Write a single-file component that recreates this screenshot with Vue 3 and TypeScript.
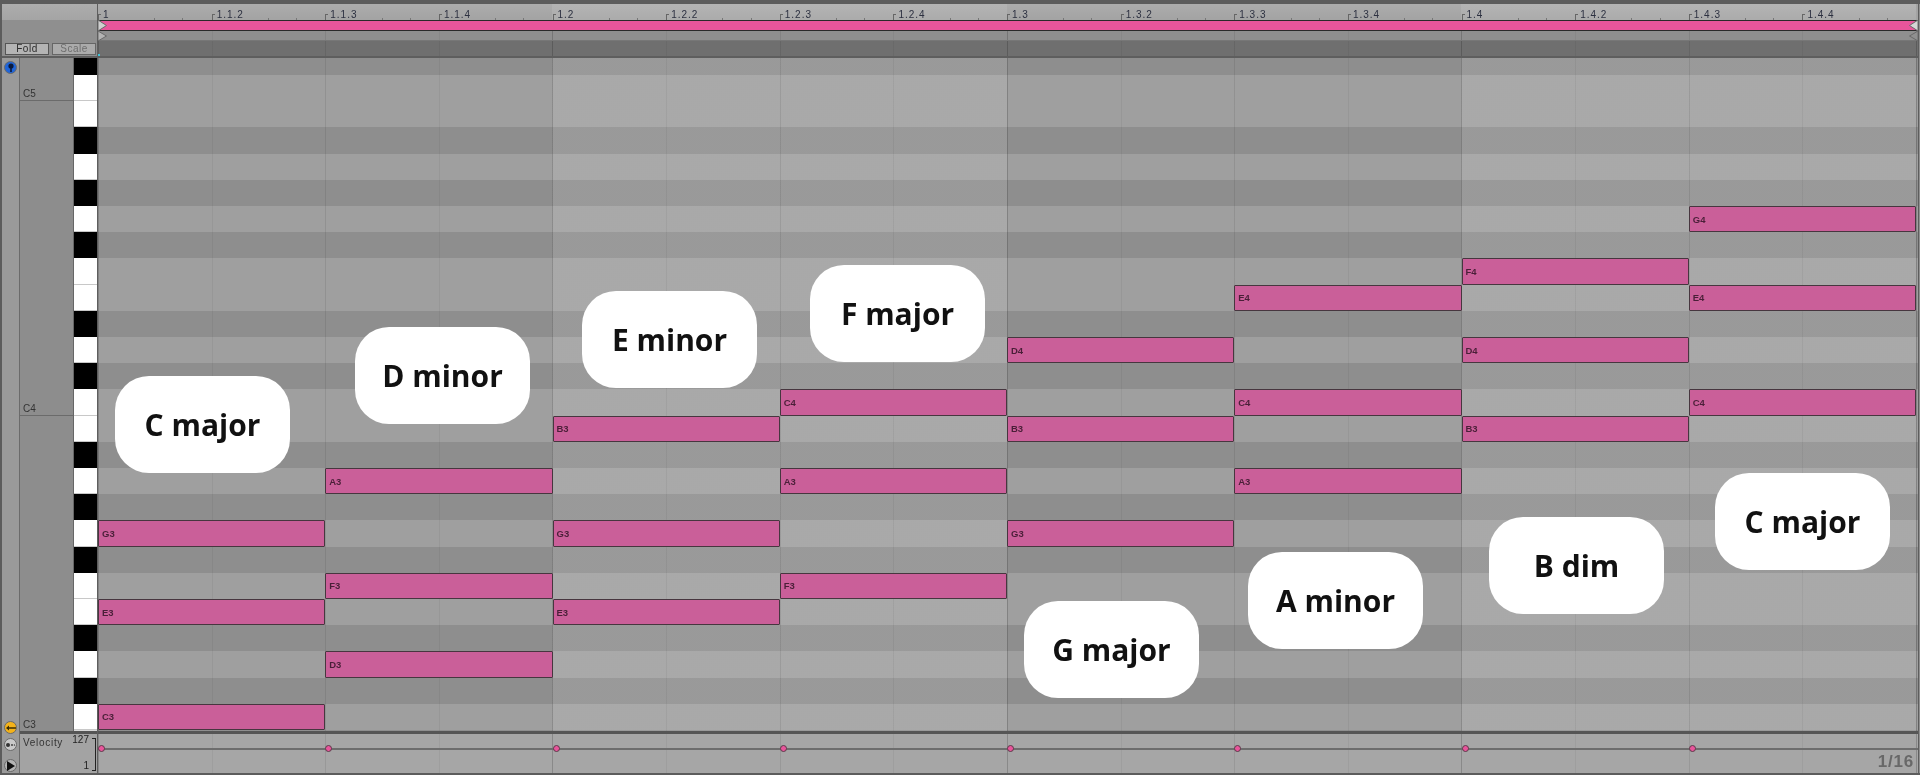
<script setup lang="ts">
const ROW_COUNT = 26
const names = ['C', 'C#', 'D', 'D#', 'E', 'F', 'F#', 'G', 'G#', 'A', 'A#', 'B']
const isBlack = (p: number) => names[((p % 12) + 12) % 12].includes('#')

// pitch 0 is C3, the top row is C#5
const rows = Array.from({ length: ROW_COUNT }, (_, i) => {
  const pitch = ROW_COUNT - 1 - i
  return { pitch, black: isBlack(pitch) }
})

function pitchOf(n: string) {
  return names.indexOf(n[0]) + (Number(n[1]) - 3) * 12
}

const chords = [
  ['C3', 'E3', 'G3'],
  ['D3', 'F3', 'A3'],
  ['E3', 'G3', 'B3'],
  ['F3', 'A3', 'C4'],
  ['G3', 'B3', 'D4'],
  ['A3', 'C4', 'E4'],
  ['B3', 'D4', 'F4'],
  ['C4', 'E4', 'G4'],
]

const notes = chords.flatMap((c, col) =>
  c.map((name) => ({
    name,
    key: name + col,
    style: { gridColumn: col + 1, gridRow: ROW_COUNT - pitchOf(name) },
  })),
)

const bubbles = [
  { label: 'C major', x: 115, y: 376 },
  { label: 'D minor', x: 355, y: 327 },
  { label: 'E minor', x: 582, y: 291 },
  { label: 'F major', x: 810, y: 265 },
  { label: 'G major', x: 1024, y: 601 },
  { label: 'A minor', x: 1248, y: 552 },
  { label: 'B dim', x: 1489, y: 517 },
  { label: 'C major', x: 1715, y: 473 },
]

const rulerLabels = ['1', '1.1.2', '1.1.3', '1.1.4', '1.2', '1.2.2', '1.2.3', '1.2.4', '1.3', '1.3.2', '1.3.3', '1.3.4', '1.4', '1.4.2', '1.4.3', '1.4.4']
const velocityDots = [0, 1, 2, 3, 4, 5, 6, 7]
</script>

<template>
  <div class="clip">
    <aside class="side">
      <div class="head-left">
        <div class="buttons">
          <span class="btn">Fold</span>
          <span class="btn off">Scale</span>
        </div>
      </div>
      <div class="side-main">
        <div class="strip">
          <span class="round blue">
            <svg width="8" height="9" viewBox="0 0 8 9"><circle cx="4" cy="3" r="2.6" fill="#0b1a3c" /><rect x="3.2" y="3" width="1.6" height="6" fill="#0b1a3c" /></svg>
          </span>
          <span class="strip-gap"></span>
          <span class="round amber">
            <svg width="10" height="6" viewBox="0 0 10 6"><path d="M0 3l3-2.5v5zM3 2.2h7v1.6H3z" fill="#3a2c05" /></svg>
          </span>
          <span class="round grey second">
            <svg width="9" height="4" viewBox="0 0 9 4"><circle cx="2" cy="2" r="2" fill="#333" /><circle cx="6" cy="2" r="1" fill="#444" /><circle cx="8.4" cy="2" r="0.7" fill="#444" /></svg>
          </span>
          <span class="round grey third">
            <svg width="9" height="10" viewBox="0 0 9 10"><path d="M1 0l8 5-8 5z" fill="#111" /></svg>
          </span>
        </div>
        <div class="side-right">
          <div class="pitch">
            <div class="labels">
              <div class="oct c5"><span>C5</span></div>
              <div class="oct c4"><span>C4</span></div>
              <div class="oct c3"><span>C3</span></div>
            </div>
            <div class="keys">
              <div v-for="r in rows" :key="r.pitch" class="key" :class="{ black: r.black }"></div>
            </div>
          </div>
          <div class="vel-left">
            <div class="vel-name">Velocity</div>
            <div class="vel-scale">
              <span>127</span>
              <span>1</span>
            </div>
            <div class="bracket"></div>
          </div>
        </div>
      </div>
    </aside>

    <main class="roll">
      <div class="ruler">
        <div v-for="l in rulerLabels" :key="l" class="tick">{{ l }}</div>
      </div>
      <div class="loop">
        <div class="loop-bar"></div>
        <svg class="flag start" width="9" height="11" viewBox="0 0 9 11"><path d="M0 0l8.5 5.5L0 11z" fill="#cfcfcf" stroke="#6a6a6a" /></svg>
        <svg class="flag end" width="9" height="11" viewBox="0 0 9 11"><path d="M9 0L.5 5.5 9 11z" fill="#d6d6d6" stroke="#6a6a6a" /></svg>
      </div>
      <div class="marker lined">
        <svg class="flag start" width="9" height="10" viewBox="0 0 9 10"><path d="M0 0l8.5 5L0 10z" fill="#b4b4b4" stroke="#6a6a6a" /></svg>
        <svg class="flag end" width="9" height="10" viewBox="0 0 9 10"><path d="M9 0L.5 5 9 10z" fill="#8f8f8f" stroke="#6a6a6a" /></svg>
      </div>
      <div class="band lined"><i class="spot"></i></div>
      <div class="grid-area">
        <div class="stripes">
          <div v-for="r in rows" :key="r.pitch" class="stripe" :class="{ dark: r.black }"></div>
        </div>
        <div class="shade"></div>
        <div class="notes">
          <div v-for="n in notes" :key="n.key" class="note" :style="n.style">{{ n.name }}</div>
        </div>
      </div>
      <div class="velocity lined">
        <div class="vel-line"></div>
        <div class="dots">
          <span v-for="d in velocityDots" :key="d" class="dot-cell"><i></i></span>
        </div>
        <span class="grid-size">1/16</span>
      </div>
    </main>

    <div
      v-for="b in bubbles"
      :key="b.label + b.x"
      class="bubble"
      :style="{ left: b.x + 'px', top: b.y + 'px' }"
    >
      {{ b.label }}
    </div>
  </div>
</template>

<style scoped>
.clip {
  position: relative;
  display: flex;
  width: 1920px;
  height: 775px;
  box-sizing: border-box;
  border-top: 4px solid #5c5c5c;
  border-bottom: 2px solid #5c5c5c;
  border-left: 2px solid #5c5c5c;
  overflow: hidden;
  background: #8f8f8f;
  font-family: 'Liberation Sans', Arial, sans-serif;
  color: #2b2b2b;
  filter: blur(0.35px);
}

.side {
  width: 95px;
  flex: none;
  display: flex;
  flex-direction: column;
}

.head-left {
  height: 52px;
  background: linear-gradient(#adadad, #a4a4a4 16px, #8f8f8f 16px);
  border-bottom: 2px solid #5e5e5e;
  display: flex;
  align-items: flex-end;
}

.buttons {
  display: flex;
  gap: 3px;
  padding: 0 0 1px 3px;
}

.btn {
  width: 42px;
  height: 10px;
  border: 1px solid #555;
  background: #b4b4b4;
  font-size: 10px;
  line-height: 10px;
  text-align: center;
  color: #2c2c2c;
  letter-spacing: 0.5px;
}

.btn.off {
  color: #6e6e6e;
  border-color: #666;
  background: #ababab;
}

.side-main {
  flex: 1;
  display: flex;
  min-height: 0;
}

.strip {
  width: 17px;
  flex: none;
  background: #9a9a9a;
  border-right: 1px solid #6b6b6b;
  display: flex;
  flex-direction: column;
  align-items: center;
  padding: 3px 0 0;
  box-sizing: content-box;
}

.strip-gap {
  height: 647px;
  flex: none;
}

.round {
  width: 11px;
  height: 11px;
  flex: none;
  border-radius: 50%;
  border: 1px solid #6a6a6a;
  display: flex;
  align-items: center;
  justify-content: center;
}

.round.blue {
  background: #2065d8;
}

.round.amber {
  background: #f4b219;
}

.round.grey {
  background: #c9c9c9;
}

.round.second {
  margin-top: 4px;
}

.round.third {
  margin-top: 8px;
  background: #b5b5b5;
}

.side-right {
  flex: 1;
  min-width: 0;
  display: flex;
  flex-direction: column;
}

.pitch {
  height: 673px;
  flex: none;
  display: flex;
}

.labels {
  width: 53px;
  flex: none;
  display: flex;
  flex-direction: column;
  background: #8d8d8d;
}

.oct {
  height: 315px;
  flex: none;
  box-sizing: border-box;
  border-bottom: 1px solid #6b6b6b;
  display: flex;
  align-items: flex-end;
  padding: 0 0 1px 3px;
  font-size: 10px;
  line-height: 11px;
  color: #333;
}

.oct.c5 {
  height: 43px;
}

.oct.c3 {
  border-bottom: none;
}

.keys {
  width: 23px;
  flex: none;
  border-left: 1px solid #666;
  display: grid;
  grid-template-rows: 17px repeat(25, 26.21px);
  background: #d8d8d8;
}

.key {
  background: #fff;
  border-bottom: 1px solid #c8c8c8;
}

.key.black {
  background: #000;
  border-bottom: none;
}

.vel-left {
  flex: 1;
  display: flex;
  border-top: 3px solid #555;
  background: #a3a3a3;
}

.vel-name {
  width: 52px;
  flex: none;
  font-size: 10px;
  line-height: 12px;
  padding: 3px 0 0 3px;
  box-sizing: border-box;
  letter-spacing: 0.7px;
  color: #333;
}

.vel-scale {
  width: 17px;
  flex: none;
  display: flex;
  flex-direction: column;
  justify-content: space-between;
  align-items: flex-end;
  font-size: 10px;
  line-height: 10px;
  padding: 1px 0 2px;
  box-sizing: border-box;
  color: #222;
}

.bracket {
  width: 3px;
  height: 31px;
  margin: 4px 0 0 3px;
  border: solid #222;
  border-width: 1px 1px 1px 0;
}

.roll {
  width: 1820px;
  flex: none;
  position: relative;
  display: flex;
  flex-direction: column;
  min-width: 0;
  border-left: 1px solid #5e5e5e;
  border-right: 1px solid #5e5e5e;
}

.lined {
  background-image: repeating-linear-gradient(90deg, rgba(0, 0, 0, 0.1) 0 1px, transparent 1px 454.5px),
    repeating-linear-gradient(90deg, rgba(0, 0, 0, 0.04) 0 1px, transparent 1px 227.25px),
    repeating-linear-gradient(90deg, rgba(0, 0, 0, 0.05) 0 1px, transparent 1px 113.625px);
}

.ruler {
  height: 16px;
  flex: none;
  display: flex;
  background-color: #a3a3a3;
  background-image: linear-gradient(90deg, transparent 0 25%, rgba(255, 255, 255, 0.09) 25% 50%, transparent 50% 75%, rgba(255, 255, 255, 0.09) 75%),
    linear-gradient(rgba(255, 255, 255, 0.1), transparent);
  background-size: 1818px 100%;
  background-repeat: no-repeat;
}

.tick {
  width: 113.625px;
  flex: none;
  font-size: 10px;
  line-height: 11px;
  padding: 5px 0 0 5px;
  box-sizing: border-box;
  color: #2c3040;
  letter-spacing: 1px;
  background-image: linear-gradient(#666, #666), linear-gradient(#666, #666), linear-gradient(#777, #777), linear-gradient(#777, #777);
  background-size: 1px 6px, 3px 1px, 1px 2px, 1px 2px;
  background-position: 0 10px, 0 10px, 50% 14px, 75% 14px;
  background-repeat: no-repeat;
}

.loop {
  position: relative;
  height: 11px;
  flex: none;
  background: #2a2a2a;
  padding: 1px 0;
  box-sizing: border-box;
}

.loop-bar {
  height: 100%;
  background: #e8559b;
}

.flag {
  position: absolute;
  top: 0;
}

.flag.start {
  left: 0;
}

.flag.end {
  right: 0;
}

.marker {
  position: relative;
  height: 9px;
  flex: none;
  background-color: #8f8f8f;
  border-bottom: 1px solid #777;
}

.band {
  position: relative;
  height: 15px;
  flex: none;
  background-color: #6f6f6f;
  border-bottom: 2px solid #5e5e5e;
}

.spot {
  position: absolute;
  left: 0;
  bottom: 0;
  width: 2px;
  height: 2px;
  background: #3fc4d8;
}

.grid-area {
  position: relative;
  height: 673px;
  flex: none;
  overflow: hidden;
}

.stripes {
  display: grid;
  grid-template-rows: 17px repeat(25, 26.21px);
  height: 100%;
}

.stripe {
  background: #9f9f9f;
}

.stripe.dark {
  background: #8e8e8e;
}

.shade {
  position: absolute;
  inset: 0;
  background-image: repeating-linear-gradient(90deg, rgba(0, 0, 0, 0.1) 0 1px, transparent 1px 454.5px),
    repeating-linear-gradient(90deg, rgba(0, 0, 0, 0.04) 0 1px, transparent 1px 227.25px),
    repeating-linear-gradient(90deg, rgba(0, 0, 0, 0.05) 0 1px, transparent 1px 113.625px),
    repeating-linear-gradient(90deg, transparent 0 454.5px, rgba(255, 255, 255, 0.1) 454.5px 909px);
}

.notes {
  position: absolute;
  inset: 0;
  display: grid;
  grid-template-columns: repeat(8, 227.25px);
  grid-template-rows: 17px repeat(25, 26.21px);
}

.note {
  background: #ca5f99;
  border: 1px solid #47363f;
  border-radius: 1px;
  display: flex;
  align-items: center;
  font-size: 9.5px;
  padding-left: 3px;
  box-sizing: border-box;
  color: #4a1f38;
  font-weight: 700;
}

.velocity {
  position: relative;
  flex: 1;
  border-top: 3px solid #555;
  background-color: #a6a6a6;
}

.vel-line {
  position: absolute;
  left: 0;
  right: 0;
  top: 14px;
  height: 2px;
  background: #6d6d6d;
}

.dots {
  position: absolute;
  left: 0;
  top: 11px;
  display: flex;
}

.dot-cell {
  width: 227.25px;
  flex: none;
}

.dot-cell i {
  display: block;
  width: 5px;
  height: 5px;
  border-radius: 50%;
  background: #e8559b;
  border: 1px solid #5a3a48;
}

.grid-size {
  position: absolute;
  right: 4px;
  bottom: 3px;
  font-size: 17px;
  font-weight: 700;
  line-height: 17px;
  letter-spacing: 0.8px;
  color: #686868;
}

.bubble {
  position: absolute;
  width: 175px;
  height: 97px;
  margin: -4px 0 0 -2px;
  border-radius: 34px;
  background: #fff;
  display: flex;
  align-items: center;
  justify-content: center;
  font-family: 'Open Sans', sans-serif;
  font-weight: 700;
  font-size: 30px;
  color: #111;
}
</style>
<style>
html,
body {
  background: #8d8d8d;
}
</style>
